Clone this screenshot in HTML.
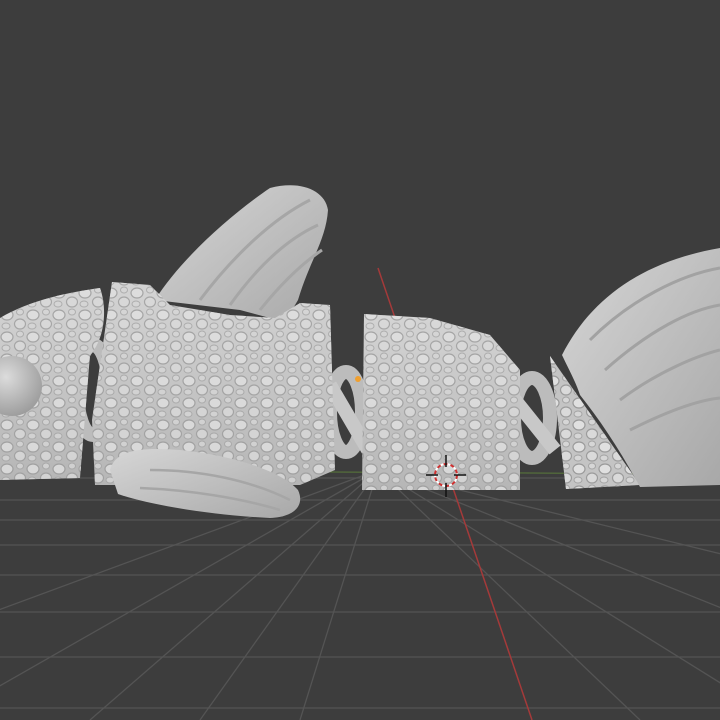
<!DOCTYPE html>
<html><head><meta charset="utf-8"><style>
html,body{margin:0;padding:0;background:#3d3d3d;}
svg{display:block}
</style></head><body>
<svg width="720" height="720" viewBox="0 0 720 720" xmlns="http://www.w3.org/2000/svg">
<defs>
<linearGradient id="body" x1="0" y1="0" x2="0" y2="1">
<stop offset="0" stop-color="#d4d4d4"/><stop offset="1" stop-color="#b6b6b6"/></linearGradient>
<linearGradient id="fin" x1="0" y1="0" x2="1" y2="1">
<stop offset="0" stop-color="#d6d6d6"/><stop offset="1" stop-color="#a8a8a8"/></linearGradient>
<radialGradient id="eye" cx="0.4" cy="0.35" r="0.7">
<stop offset="0" stop-color="#dcdcdc"/><stop offset="1" stop-color="#9a9a9a"/></radialGradient>
<pattern id="bumps" width="26" height="22" patternUnits="userSpaceOnUse">
<ellipse cx="7" cy="7" rx="6" ry="5" fill="#e0e0e0" stroke="#9a9a9a" stroke-width="1.2"/>
<ellipse cx="20" cy="16" rx="5.5" ry="5" fill="#dadada" stroke="#9c9c9c" stroke-width="1.2"/>
<ellipse cx="20" cy="4" rx="3.5" ry="3" fill="#d6d6d6" stroke="#a4a4a4" stroke-width="1"/>
<ellipse cx="6" cy="18" rx="4" ry="3" fill="#d6d6d6" stroke="#a4a4a4" stroke-width="1"/>
</pattern>
</defs>
<rect width="720" height="720" fill="#3d3d3d"/>
<g stroke="#545454" stroke-width="1.3" fill="none">
<line x1="0" y1="478" x2="720" y2="478"/>
<line x1="0" y1="500" x2="720" y2="500"/>
<line x1="0" y1="520" x2="720" y2="520"/>
<line x1="0" y1="545" x2="720" y2="545"/>
<line x1="0" y1="575" x2="720" y2="575"/>
<line x1="0" y1="612" x2="720" y2="612"/>
<line x1="0" y1="657" x2="720" y2="657"/>
<line x1="0" y1="708" x2="720" y2="708"/>
<line x1="378" y1="470" x2="-300" y2="720"/>
<line x1="378" y1="470" x2="-60" y2="720"/>
<line x1="378" y1="470" x2="90" y2="720"/>
<line x1="378" y1="470" x2="200" y2="720"/>
<line x1="378" y1="470" x2="300" y2="720"/>
<line x1="378" y1="470" x2="640" y2="720"/>
<line x1="378" y1="470" x2="780" y2="720"/>
<line x1="378" y1="470" x2="1000" y2="720"/>
<line x1="378" y1="470" x2="1400" y2="720"/>
</g>
<line x1="330" y1="472" x2="720" y2="474" stroke="#5a7a3a" stroke-width="1"/>
<line x1="378" y1="268" x2="532" y2="720" stroke="#a43a3a" stroke-width="1.5"/>
<path d="M550 356 L640 485 L566 489 Z" fill="#c4c4c4"/>
<path d="M550 356 L640 485 L566 489 Z" fill="url(#bumps)"/>
<path d="M562 355 C590 300 640 262 720 248 L720 485 L640 487 C620 450 600 420 580 395 C575 380 568 368 562 355Z" fill="url(#fin)"/>
<g stroke="#a2a2a2" stroke-width="3" fill="none">
<path d="M590 340 C630 300 680 275 720 268"/><path d="M605 370 C650 330 690 310 720 305"/>
<path d="M620 400 C660 370 700 355 720 350"/><path d="M630 430 C670 410 700 400 720 398"/>
</g>
<g fill="none" stroke="#bcbcbc" stroke-width="14">
<ellipse cx="93" cy="390" rx="16" ry="45"/>
<ellipse cx="346" cy="412" rx="16" ry="40"/>
<ellipse cx="532" cy="418" rx="18" ry="40"/>
</g>
<path d="M330 385 L368 450" stroke="#c8c8c8" stroke-width="14"/>
<path d="M515 400 L555 450" stroke="#c8c8c8" stroke-width="14"/>
<path d="M364 314 L430 318 L490 335 L520 370 L520 490 L362 490 Z" fill="url(#body)"/>
<path d="M364 314 L430 318 L490 335 L520 370 L520 490 L362 490 Z" fill="url(#bumps)" opacity="0.8"/>
<path d="M155 300 C180 260 230 215 270 188 C300 180 325 190 328 210 C326 240 310 260 298 300 L285 322 L240 310 Z" fill="url(#fin)"/>
<g stroke="#a6a6a6" stroke-width="3" fill="none">
<path d="M200 300 C230 260 270 220 310 200"/><path d="M230 305 C255 270 285 240 318 225"/>
<path d="M260 310 C280 285 300 265 322 250"/>
</g>
<path d="M112 282 L150 285 L170 305 L230 315 L275 318 L300 303 L330 305 L335 470 L300 485 L95 485 L92 420 Z" fill="url(#body)"/>
<path d="M112 282 L150 285 L170 305 L230 315 L275 318 L300 303 L330 305 L335 470 L300 485 L95 485 L92 420 Z" fill="url(#bumps)" opacity="0.8"/>
<path d="M110 470 C115 450 140 447 180 450 C230 455 280 470 298 490 C305 505 295 517 270 518 C210 515 150 505 118 494 Z" fill="url(#fin)"/>
<g stroke="#a6a6a6" stroke-width="2.5" fill="none">
<path d="M150 470 C200 470 250 480 290 500"/><path d="M140 488 C190 490 240 498 280 510"/>
</g>
<path d="M0 318 C30 300 70 292 100 288 C108 310 104 340 90 355 L80 478 L0 480 Z" fill="url(#body)"/>
<path d="M0 318 C30 300 70 292 100 288 C108 310 104 340 90 355 L80 478 L0 480 Z" fill="url(#bumps)" opacity="0.8"/>
<circle cx="12" cy="386" r="30" fill="url(#eye)"/>
<circle cx="358" cy="379" r="3" fill="#f0a030"/>
<circle cx="446" cy="475" r="11" fill="none" stroke="#d03030" stroke-width="2" stroke-dasharray="4 3"/>
<circle cx="446" cy="475" r="11" fill="none" stroke="#fff" stroke-width="2" stroke-dasharray="3 4" stroke-dashoffset="3"/>
<g stroke="#111" stroke-width="1.5"><line x1="426" y1="475" x2="438" y2="475"/><line x1="454" y1="475" x2="466" y2="475"/>
<line x1="446" y1="455" x2="446" y2="467"/><line x1="446" y1="483" x2="446" y2="497"/></g>
</svg>
</body></html>
